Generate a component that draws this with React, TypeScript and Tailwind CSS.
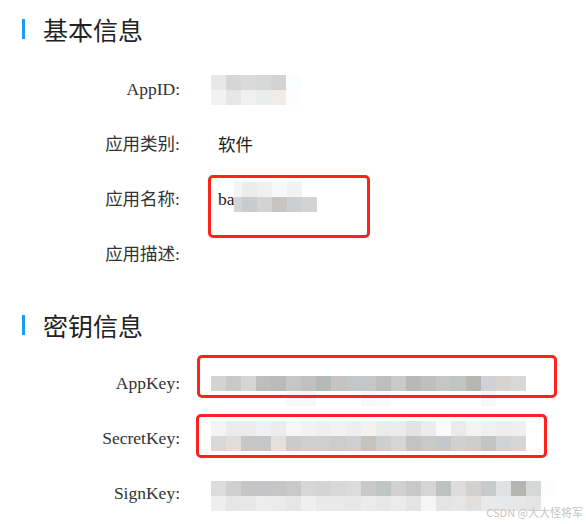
const appId = [
  ['#e8e8e8', '#d6d6d6', '#dadada', '#d6d8d8', '#d5d3d2', '#fbfcfe'],
  ['#f2f2f2', '#e6e6e6', '#f0f0f0', '#ebecec', '#eeedeb', '#fdfdfd'],
];

const nameBlur = [
  ['#f4f4f4', '#ececec', '#f0f0f0', '#f7f8fa', '#f1f2f1', '#ffffff'],
  ['#d4d4d4', '#c9cbcc', '#d3d3d3', '#c6c5c3', '#ccced0', '#d3d3d3'],
];

const appKey = [
  ['#d3d3d3', '#c8c8c8', '#d5d5d5', '#bdbdbd', '#bababa', '#c6c6c6', '#c1bfc0', '#b4b9ba', '#c6c3c0', '#c3c7ca', '#c5c7c8', '#c0bebc', '#c9c9c9', '#b6b8ba', '#bfbfbf', '#c5c6c6', '#c2c3c3', '#b8b6b3', '#cfd1d4', '#d5d4d2', '#d8d8d8'],
  ['#ffffff', '#ffffff', '#ffffff', '#ffffff', '#ffffff', '#f8f8f8', '#f7f7f7', '#ffffff', '#ffffff', '#ffffff', '#f8f8f8', '#fafafa', '#ffffff', '#ffffff', '#ffffff', '#ffffff', '#ffffff', '#ffffff', '#f7f7f7', '#ffffff', '#ffffff'],
];

const secretKey = [
  ['#f4f4f4', '#ebebeb', '#ebebeb', '#eef0f2', '#ececec', '#f6f6f6', '#f2f2f2', '#efefef', '#f2f2f2', '#eeeeee', '#f3f2ef', '#eaecea', '#ebeceb', '#e3e3e3', '#ececec', '#fafafa', '#eaeaea', '#f4f3f0', '#eff0f2', '#eeeeee', '#efefef'],
  ['#d8d8d8', '#e0dfdd', '#c6c7c9', '#c5c8c9', '#e2e1df', '#cbcbcb', '#cfcfcf', '#cfcfcf', '#caccce', '#cfcfcf', '#c4c3c0', '#cdcfcf', '#d5d5d5', '#c2c3c5', '#c9c9c7', '#c5c8ca', '#d0d0d0', '#cdcdcb', '#c3c4c4', '#d1d2d4', '#d6d6d6'],
];

const signKey = [
  ['#dcdcdc', '#cfcfcf', '#c5c5c5', '#c5c5c7', '#c6c6c6', '#c9c9c9', '#d7d7d9', '#d3d5d5', '#d9d9d9', '#dbdbdb', '#c8c8c6', '#c0c4c4', '#d1d1cf', '#c7c8c8', '#d5d5d3', '#bcc1c1', '#dcdcdc', '#d4d0ce', '#c5cacd', '#e0e1e3', '#b6b5b3', '#d6d8d8', '#fafcfe'],
  ['#eeeeee', '#e6e6e6', '#e8e8e8', '#ededed', '#ebebeb', '#e6e6e6', '#efefef', '#e8e9e9', '#e8e9e8', '#e7e8e7', '#ebebeb', '#e7e7e7', '#ebebeb', '#e4e4e4', '#f5f5f3', '#e4e4e4', '#e6e6e6', '#e2e0df', '#e9e9ea', '#e7e8ea', '#e6e6e6', '#e4e4e4', '#ffffff'],
];

// pixelated blur of hidden values; first column may be narrower
function Mosaic({ rows, first = 15 }: { rows: string[][]; first?: number }) {
  return (
    <div className="flex flex-col">
      {rows.map((row, i) => (
        <div key={i} className="flex">
          {row.map((c, j) => (
            <div
              key={j}
              className="h-[15px]"
              style={{ backgroundColor: c, width: j === 0 ? first : 15 }}
            />
          ))}
        </div>
      ))}
    </div>
  );
}

function Heading({ title }: { title: string }) {
  return (
    <div className="flex h-[40px] items-center pl-[22px]">
      <div className="h-[20px] w-[3px] bg-[#1a9df0]" />
      <h2 className="ml-[18px] font-['Noto_Sans_CJK_SC',sans-serif] text-[25px] leading-[40px] text-[#222]">
        {title}
      </h2>
    </div>
  );
}

function Row({ label, children }: { label: string; children?: React.ReactNode }) {
  return (
    <div className="flex h-[55px] items-center">
      <div className="w-[180px] shrink-0 text-right font-['Liberation_Serif','Noto_Sans_CJK_SC',serif] text-[17.5px] text-[#333]">
        {label}
      </div>
      <div className="relative flex h-full flex-1 items-center">{children}</div>
    </div>
  );
}

function RedBox({ className }: { className: string }) {
  return <div className={`pointer-events-none absolute rounded-[5px] border-[3px] border-[#ff2020] ${className}`} />;
}

export default function App() {
  return (
    <div className="relative h-[524px] w-[586px] overflow-hidden bg-white">
      <div className="pt-[9px]">
        <Heading title="基本信息" />
      </div>

      <div className="mt-[13px] flex flex-col">
        <Row label="AppID:">
          <div className="ml-[31px]">
            <Mosaic rows={appId} />
          </div>
        </Row>
        <Row label="应用类别:">
          <span className="ml-[38px] font-['Noto_Sans_CJK_SC',sans-serif] text-[17.5px] text-[#222]">软件</span>
        </Row>
        <Row label="应用名称:">
          <div className="ml-[38px] flex items-center">
            <span className="font-['Liberation_Serif',serif] text-[17.5px] text-[#222]">ba</span>
            <div className="-ml-[1px] mb-[6px]">
              <Mosaic rows={nameBlur} first={8} />
            </div>
          </div>
          <RedBox className="left-[28px] top-[3px] h-[63px] w-[162px]" />
        </Row>
        <Row label="应用描述:" />
      </div>

      <div className="mt-[23px]">
        <Heading title="密钥信息" />
      </div>

      <div className="mt-[11px] flex flex-col">
        <Row label="AppKey:">
          <div className="ml-[31px] mt-[15px]">
            <Mosaic rows={appKey} />
          </div>
          <RedBox className="-top-[1px] left-[17px] h-[43px] w-[360px]" />
        </Row>
        <Row label="SecretKey:">
          <div className="mb-[5px] ml-[31px]">
            <Mosaic rows={secretKey} />
          </div>
          <RedBox className="left-[16px] top-[3px] h-[44px] w-[351px]" />
        </Row>
        <Row label="SignKey:">
          <div className="ml-[31px] mt-[5px]">
            <Mosaic rows={signKey} />
          </div>
        </Row>
      </div>

      <div className="absolute bottom-[5px] right-[3px] font-['Noto_Sans_CJK_SC',sans-serif] text-[11px] leading-[14px] text-[#c4c4c4]">
        CSDN @大大怪将军
      </div>
    </div>
  );
}
